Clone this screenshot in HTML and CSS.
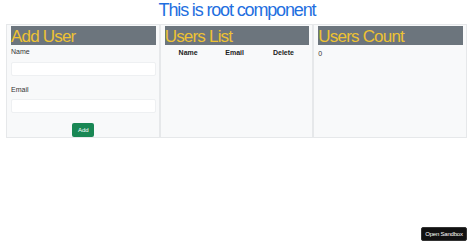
FILE: index.html
```html
<!DOCTYPE html>
<html>
<head>
<meta charset="utf-8">
<link rel="stylesheet" href="styles.css">
</head>
<body>
<h1 class="title">This is root component</h1>
<div class="row">
  <div class="col">
    <h2 class="head">Add User</h2>
    <label class="label">Name</label>
    <div class="input"></div>
    <label class="label label-2">Email</label>
    <div class="input input-2"></div>
    <div class="btn-wrap"><button class="btn">Add</button></div>
  </div>
  <div class="col">
    <h2 class="head">Users List</h2>
    <table class="table">
      <thead><tr><th>Name</th><th>Email</th><th>Delete</th></tr></thead>
    </table>
  </div>
  <div class="col">
    <h2 class="head">Users Count</h2>
    <div class="count">0</div>
  </div>
</div>
<button class="sandbox">Open Sandbox</button>
</body>
</html>
```
FILE: styles.css
```css
* { box-sizing: border-box; }
body {
  margin: 0;
  font-family: "Liberation Sans", Arial, sans-serif;
  background: #fff;
  color: #212529;
}
.title {
  margin: 0;
  font-size: 18px;
  line-height: 21px;
  font-weight: 400;
  letter-spacing: -1.15px;
  text-align: center;
  color: #1f6fe0;
}
.row {
  display: grid;
  grid-template-columns: 1fr 1fr 1fr;
  margin: 3px 7px 0 6px;
}
.col {
  background: #f8f9fa;
  border: 1px solid #e6e8ea;
  padding: 1px 3px 0 4px;
  display: flex;
  flex-direction: column;
}
.head {
  margin: 0;
  height: 19px;
  background: #6c757d;
  color: #eec233;
  font-size: 17px;
  line-height: 19px;
  font-weight: 400;
  letter-spacing: -0.8px;
  padding-top: 1px;
  white-space: nowrap;
}
.label {
  display: block;
  margin-top: 2px;
  font-size: 7px;
  line-height: 10px;
  color: #333;
}
.label-2 { margin-top: 9px; }
.input {
  margin-top: 5px;
  height: 14px;
  background: #fff;
  border: 1px solid #eef0f2;
  border-radius: 2px;
}
.input-2 { margin-top: 4px; }
.btn-wrap {
  display: flex;
  justify-content: center;
  margin-top: 10px;
}
.btn {
  width: 22px;
  height: 14px;
  padding: 0;
  border: none;
  border-radius: 2px;
  background: #198754;
  color: #fff;
  font-family: "Liberation Sans", Arial, sans-serif;
  font-size: 6px;
}
.table {
  width: 100%;
  border-collapse: collapse;
  margin-top: 3px;
}
.table th {
  font-size: 7px;
  line-height: 10px;
  font-weight: 700;
  color: #222;
  text-align: center;
  padding: 0;
}
.count {
  margin-top: 4px;
  font-size: 7px;
  line-height: 10px;
  color: #333;
}
.sandbox {
  position: fixed;
  right: 7px;
  bottom: 7px;
  width: 46px;
  height: 14px;
  padding: 0;
  border: 1px solid #333;
  border-radius: 2px;
  background: #111;
  color: #fff;
  font-family: "Liberation Sans", Arial, sans-serif;
  font-size: 6px;
  letter-spacing: -0.2px;
}
```
